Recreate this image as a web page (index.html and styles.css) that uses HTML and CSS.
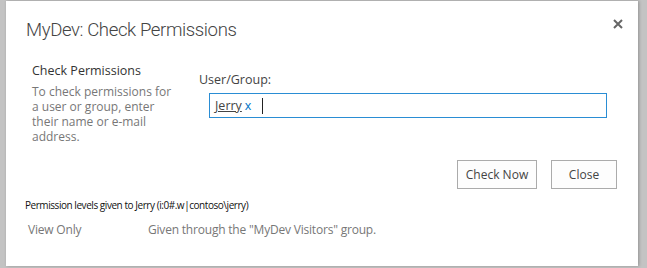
FILE: index.html
```html
<!DOCTYPE html>
<html>
<head>
<meta charset="utf-8">
<link rel="stylesheet" href="styles.css">
</head>
<body>
<div class="dialog">
  <div class="header">
    <h1 class="title">MyDev: Check Permissions</h1>
    <button class="close" aria-label="Close">
      <svg width="10" height="10" viewBox="0 0 10 10"><path d="M1 1 L9 9 M9 1 L1 9" stroke="#666" stroke-width="2" fill="none"/></svg>
    </button>
  </div>
  <div class="section">
    <div class="sec-left">
      <h2 class="sec-title">Check Permissions</h2>
      <p class="sec-desc">To check permissions for a user or group, enter their name or e-mail address.</p>
    </div>
    <div class="sec-right">
      <div class="field-label">User/Group:</div>
      <div class="picker">
        <span class="entity">Jerry</span><span class="remove">x</span><span class="caret"></span>
      </div>
    </div>
  </div>
  <div class="buttons">
    <button class="btn btn-check">Check Now</button>
    <button class="btn btn-close">Close</button>
  </div>
  <div class="results">
    <div class="caption">Permission levels given to Jerry (i:0#.w|contoso\jerry)</div>
    <div class="row">
      <span class="level">View Only</span>
      <span class="source">Given through the "MyDev Visitors" group.</span>
    </div>
  </div>
</div>
</body>
</html>
```
FILE: styles.css
```css
html, body {
  margin: 0;
  padding: 0;
}
body {
  width: 647px;
  height: 268px;
  background: #c3c3c3;
  overflow: hidden;
  font-family: "Open Sans", "Noto Sans", sans-serif;
}
.dialog {
  margin: 1px 0 0 6px;
  width: 632px;
  height: 265px;
  background: #fff;
  box-shadow: 1px 0 3px rgba(0,0,0,0.25);
  display: flex;
  flex-direction: column;
  box-sizing: border-box;
}
.header {
  display: flex;
  justify-content: space-between;
  align-items: flex-start;
  padding: 16px 15px 0 20px;
}
.title {
  margin: 0;
  font-family: Roboto, "Open Sans", sans-serif;
  font-weight: 300;
  font-size: 18.6px;
  line-height: 26px;
  color: #444;
  letter-spacing: -0.4px;
}
.close {
  border: 0;
  background: none;
  padding: 0;
  margin-top: 2px;
  width: 10px;
  height: 10px;
  display: block;
}
.close svg { display: block; }
.section {
  display: flex;
  padding: 19px 0 0 26px;
}
.sec-left {
  width: 167px;
  flex: 0 0 167px;
}
.sec-title {
  margin: 0;
  font-weight: 400;
  font-size: 12.5px;
  line-height: 17px;
  color: #333;
}
.sec-desc {
  margin: 5px 0 0;
  font-size: 12px;
  line-height: 15px;
  color: #777;
  width: 140px;
}
.sec-right {
  padding-top: 9px;
}
.field-label {
  font-size: 12.5px;
  line-height: 17px;
  color: #444;
}
.picker {
  margin: 5px 0 0 10px;
  width: 398px;
  height: 25px;
  border: 1px solid #2a8dd4;
  box-sizing: border-box;
  display: flex;
  align-items: center;
  padding-left: 5px;
  font-size: 12.5px;
}
.entity {
  color: #444;
  text-decoration: underline;
}
.remove {
  color: #0072c6;
  margin-left: 3px;
}
.caret {
  width: 1px;
  height: 16px;
  background: #222;
  margin-left: 11px;
}
.buttons {
  display: flex;
  justify-content: flex-end;
  gap: 14px;
  padding: 16px 21px 0 0;
}
.btn {
  height: 29px;
  border: 1px solid #ababab;
  background: #fdfdfd;
  font-family: "Open Sans", "Noto Sans", sans-serif;
  font-size: 12px;
  color: #444;
  padding: 0;
}
.btn-check { width: 80px; }
.btn-close { width: 66px; }
.results {
  padding: 9px 0 0 19px;
}
.caption {
  font-size: 10px;
  line-height: 14px;
  color: #111;
  letter-spacing: -0.45px;
}
.row {
  display: flex;
  padding: 10px 0 0 3px;
  font-size: 12px;
  line-height: 16px;
  color: #777;
  letter-spacing: -0.2px;
}
.level {
  width: 120px;
}
```
